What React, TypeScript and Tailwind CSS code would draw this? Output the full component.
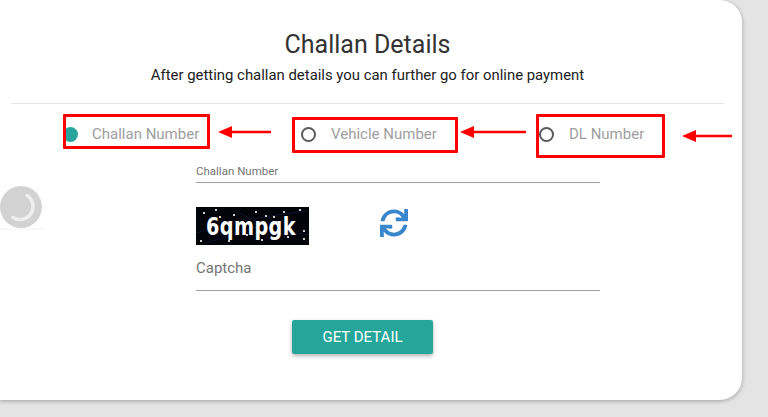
import { FaSync } from "react-icons/fa";

function Radio({ on }: { on?: boolean }) {
  return on ? (
    <span className="block h-[15px] w-[15px] shrink-0 rounded-full bg-[#26a69a]" />
  ) : (
    <span className="block h-[15px] w-[15px] shrink-0 rounded-full border-2 border-[#5a5a5a]" />
  );
}

function Option({ label, on, cls }: { label: string; on?: boolean; cls: string }) {
  return (
    <div className={`flex items-center ${cls}`}>
      <Radio on={on} />
      <span className="text-[15px] leading-[20px] text-[#9e9e9e]">{label}</span>
    </div>
  );
}

function Arrow({ x1, x2, y }: { x1: number; x2: number; y: number }) {
  return (
    <svg className="absolute left-0 top-0" width="768" height="417" viewBox="0 0 768 417">
      <line x1={x1} y1={y} x2={x2 + 12} y2={y} stroke="#f00" strokeWidth="2.4" />
      <polygon points={`${x2},${y} ${x2 + 14},${y - 6} ${x2 + 14},${y + 6}`} fill="#f00" />
    </svg>
  );
}

function Captcha() {
  const dots = [
    [8, 6], [20, 3], [24, 10], [70, 9], [78, 10], [88, 5], [80, 15], [104, 3], [5, 34], [33, 34],
    [51, 28], [92, 30], [108, 32], [66, 33], [15, 20], [108, 24], [38, 8], [60, 5],
  ];
  return (
    <div className="relative h-[38px] w-[113px] overflow-hidden bg-[#03030a]">
      <svg className="absolute left-0 top-0" width="113" height="38" viewBox="0 0 113 38">
        <path d="M0 26 L40 14 L110 4 M10 36 L60 20 L113 28 M40 4 L90 30" stroke="#10142a" strokeWidth="1" fill="none" />
        {dots.map(([x, y], i) => (
          <circle key={i} cx={x} cy={y} r="1.1" fill="#fff" />
        ))}
      </svg>
      <span className="absolute left-[10px] top-[5px] origin-left scale-x-[0.77] text-[25px] font-bold leading-[30px] tracking-[0.5px] text-white [font-family:'DejaVu_Sans',sans-serif]">
        6qmpgk
      </span>
    </div>
  );
}

function Spinner() {
  return (
    <svg className="absolute left-0 top-[186px]" width="44" height="44" viewBox="0 0 44 44">
      <line x1="0" y1="43" x2="44" y2="43" stroke="#f1f1f1" strokeWidth="1" />
      <circle cx="21" cy="21" r="21" fill="#d2d2d2" />
      <path d="M27 9.5 A13 13 0 0 1 13 31.5" fill="none" stroke="#efefef" strokeWidth="3.5" strokeLinecap="round" />
    </svg>
  );
}

export default function App() {
  return (
    <div className="relative h-[417px] w-[768px] overflow-hidden bg-[#e3e4e3] [font-family:Roboto,sans-serif]">
      <div className="flex h-[400px] w-[742px] flex-col rounded-r-[22px] bg-white pt-[29px] shadow-[0_1px_4px_rgba(0,0,0,0.3)]">
        <h1 className="ml-[-7px] text-center text-[25px] font-normal leading-[32px] text-[#333]">Challan Details</h1>
        <p className="ml-[-7px] mt-[3px] text-center text-[14.9px] leading-[22px] text-[#212121]">
          After getting challan details you can further go for online payment
        </p>
        <div className="ml-[11px] mt-[17px] h-px w-[713px] bg-[#e6e6e6]" />
        <div className="mt-[20px] flex pl-[63px]">
          <Option label="Challan Number" on cls="w-[238px] gap-[14px]" />
          <Option label="Vehicle Number" cls="w-[238px] gap-[15px]" />
          <Option label="DL Number" cls="w-[200px] gap-[15px]" />
        </div>
        <div className="ml-[196px] mt-[19px] w-[404px]">
          <div className="border-b border-[#9e9e9e] pb-[3px] text-[11.5px] leading-[16px] text-[#757575]">Challan Number</div>
          <div className="mt-[24px] flex items-center">
            <Captcha />
            <FaSync className="ml-[71px] h-[28px] w-[28px] -translate-y-[3px] text-[#3a86cc]" />
          </div>
          <div className="mt-[13px] border-b border-[#9e9e9e] pb-[12px] text-[15px] leading-[20px] text-[#757575]">Captcha</div>
          <button className="ml-[96px] mt-[29px] block h-[34px] w-[141px] rounded-[2px] bg-[#26a69a] text-[15px] text-white shadow-[0_2px_4px_rgba(0,0,0,0.3)]">
            GET DETAIL
          </button>
        </div>
      </div>

      <Spinner />

      <div className="absolute left-[63px] top-[114px] h-[35px] w-[147px] rounded-[1px] border-[3px] border-[#f00]" />
      <div className="absolute left-[292px] top-[117px] h-[36px] w-[166px] rounded-[1px] border-[3px] border-[#f00]" />
      <div className="absolute left-[536px] top-[114px] h-[44px] w-[129px] rounded-[1px] border-[3px] border-[#f00]" />
      <Arrow x1={271} x2={218} y={132} />
      <Arrow x1={526} x2={460} y={132} />
      <Arrow x1={732} x2={682} y={136} />
    </div>
  );
}
